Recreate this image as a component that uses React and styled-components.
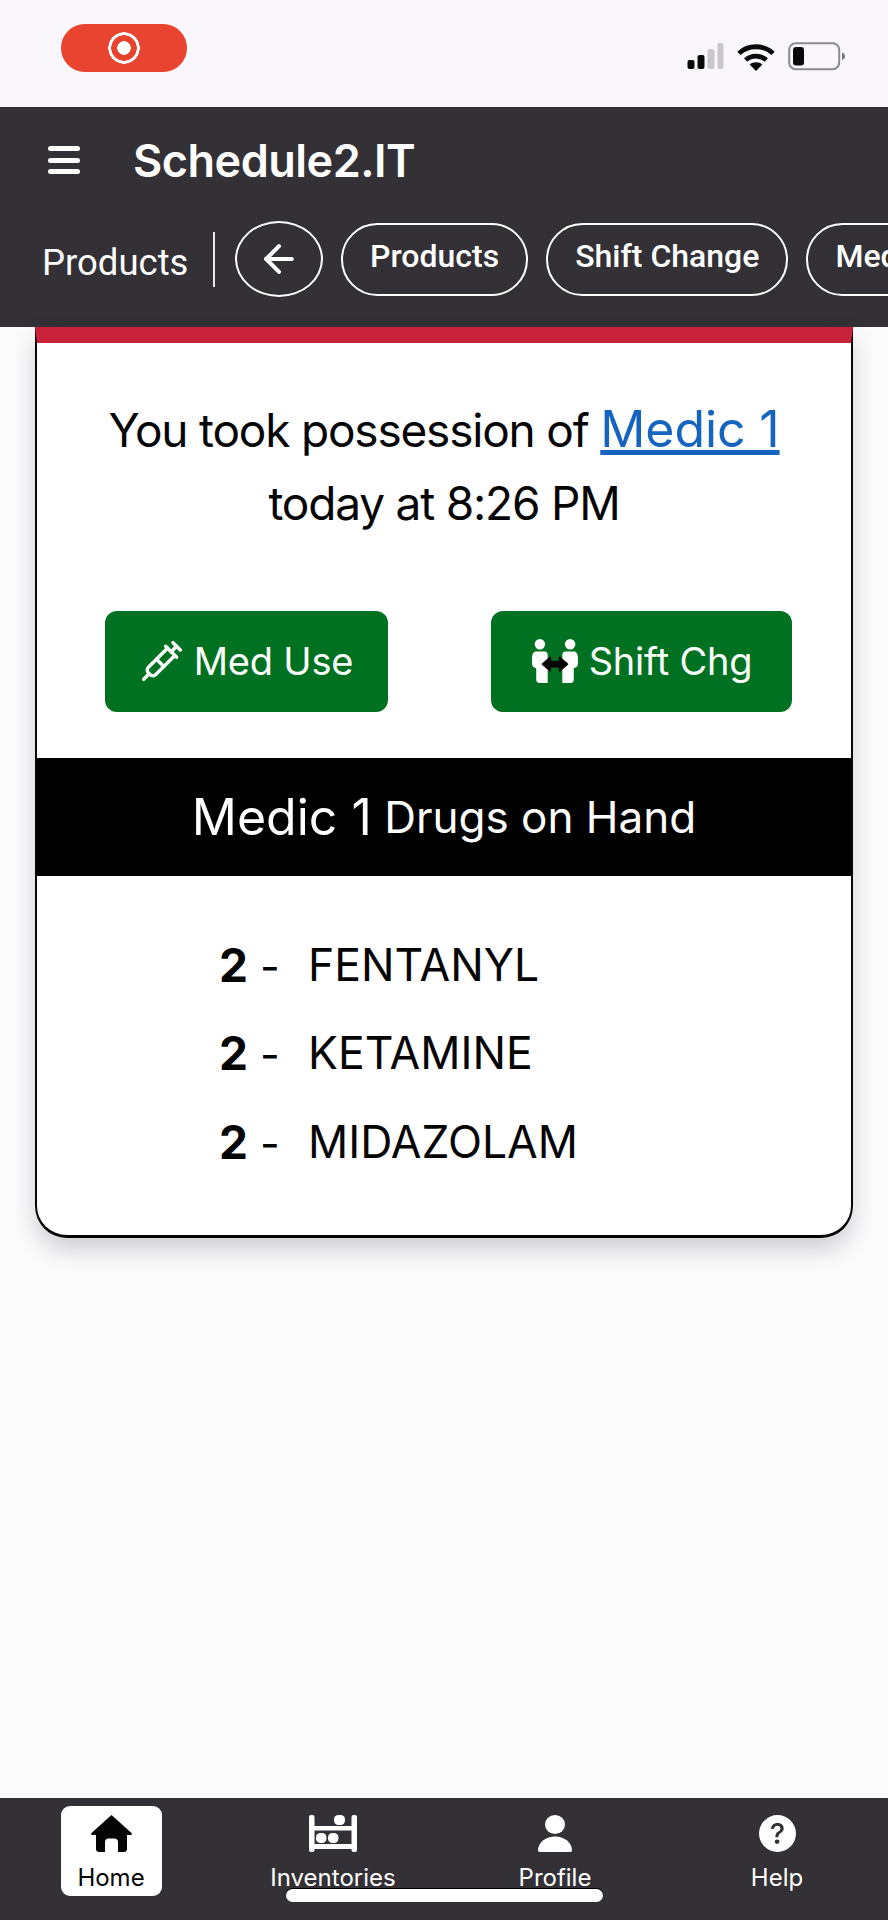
import React from "react"
import styled, { createGlobalStyle } from "styled-components"
import { ArrowLeft, Syringe } from "lucide-react"
import { BsQuestionCircleFill } from "react-icons/bs"

const drugs = ["FENTANYL", "KETAMINE", "MIDAZOLAM"]
const pills = ["Products", "Shift Change", "Med Use"]

function SignalIcon() {
  return (
    <svg width="37" height="28" viewBox="0 0 36 28">
      <rect x="0" y="17" width="7" height="9" rx="2" fill="#0a0a0a" />
      <rect x="10" y="12" width="7" height="14" rx="2" fill="#0a0a0a" />
      <rect x="20" y="6" width="7" height="20" rx="2" fill="#c9c7cb" />
      <rect x="30" y="0" width="6" height="26" rx="2" fill="#c9c7cb" />
    </svg>
  )
}

function WifiIcon() {
  return (
    <svg width="40" height="29" viewBox="0 0 38 28" fill="none" stroke="#0a0a0a" strokeWidth="4.6">
      <path d="M2.5 10C11.5 1.5 26.5 1.5 35.5 10" />
      <path d="M9 16.5C14.5 11.5 23.5 11.5 29 16.5" />
      <path d="M19 27l-6.2-6.2c3.4-2.8 9-2.8 12.4 0z" fill="#0a0a0a" stroke="none" />
    </svg>
  )
}

function BatteryIcon() {
  return (
    <svg width="58" height="30" viewBox="0 0 58 30">
      <rect x="1.2" y="1.2" width="50" height="26" rx="6.5" fill="none" stroke="#8b8a8e" strokeWidth="2" />
      <rect x="5" y="5" width="11" height="18.5" rx="3" fill="#0a0a0a" />
      <path d="M54 10.5c2.4 1 3 2.2 3 3.7s-.6 2.7-3 3.7z" fill="#77767a" />
    </svg>
  )
}

function ShiftIcon() {
  return (
    <svg width="48" height="44" viewBox="0 0 46 42">
      <g fill="#fff">
        <circle cx="8.5" cy="5" r="5" />
        <circle cx="37.5" cy="5" r="5" />
        <path d="M5 12h8c2 0 3 1.500 3 3.500V42H8c-1.800 0-3-1-3-3V28c-2.500-.5-4-2-4-4.500v-5C1 14.500 2.500 12 5 12z" />
        <path d="M41 12h-8c-2 0-3 1.500-3 3.500V42h8c1.800 0 3-1 3-3V28c2.500-.5 4-2 4-4.500v-5c0-4-1.500-6.500-4-6.500z" />
      </g>
      <path d="M11 24l7.500-6.500v4h9v-4L35 24l-7.500 6.500v-4h-9v4z" fill="#050505" stroke="#050505" strokeWidth="1.500" strokeLinejoin="round" />
    </svg>
  )
}

function HomeIcon() {
  return (
    <svg width="41" height="37" viewBox="0 0 41 37">
      <path
        d="M20.500 0 40.500 18c.8 1 .2 2-1 2H36v14c0 1.700-1.300 3-3 3h-6V27c0-2-1.500-3.500-3.500-3.500h-6C15.500 23.500 14 25 14 27v10H8c-1.700 0-3-1.300-3-3V20H1.500c-1.200 0-1.800-1-1-2z"
        fill="#050505"
      />
    </svg>
  )
}

function ShelfIcon() {
  return (
    <svg width="48" height="37" viewBox="0 0 48 37">
      <g fill="#fff">
        <rect x="0" y="0" width="5.500" height="37" rx="2" />
        <rect x="42.500" y="0" width="5.500" height="37" rx="2" />
        <rect x="3" y="11" width="42" height="4.500" />
        <rect x="3" y="29" width="42" height="5" />
        <rect x="7" y="18" width="10.500" height="10" rx="4.500" />
        <rect x="19" y="18" width="10.500" height="10" rx="4.500" />
        <rect x="25" y="0" width="11" height="10" rx="4.500" />
      </g>
    </svg>
  )
}

function PersonIcon() {
  return (
    <svg width="34" height="37" viewBox="0 0 34 37">
      <ellipse cx="17" cy="9.500" rx="10" ry="9.500" fill="#fff" />
      <path d="M2 37c-1.500 0-2-1-2-2 .5-8 8-13.500 17-13.500S33.500 27 34 35c0 1-.5 2-2 2z" fill="#fff" />
    </svg>
  )
}

const tabs = [
  { label: "Home", icon: <HomeIcon />, active: true },
  { label: "Inventories", icon: <ShelfIcon /> },
  { label: "Profile", icon: <PersonIcon /> },
  { label: "Help", icon: <BsQuestionCircleFill size={37} color="#fff" /> },
]

export default function App() {
  return (
    <Page>
      <GlobalStyle />
      <StatusBar>
        <RecordPill>
          <RecordDot />
        </RecordPill>
        <StatusIcons>
          <SignalIcon />
          <WifiIcon />
          <BatteryIcon />
        </StatusIcons>
      </StatusBar>

      <Header>
        <TitleRow>
          <Hamburger>
            <span />
            <span />
            <span />
          </Hamburger>
          <Title>Schedule2.IT</Title>
        </TitleRow>
        <CrumbRow>
          <Crumb>Products</Crumb>
          <CrumbDivider />
          <BackButton aria-label="Back">
            <ArrowLeft size={44} strokeWidth={2.2} />
          </BackButton>
          {pills.map((p) => (
            <Pill key={p}>{p}</Pill>
          ))}
        </CrumbRow>
      </Header>

      <Main>
        <Card>
          <Possession>
            You took possession of <MedicLink href="#">Medic 1</MedicLink>
            <br />
            today at 8:26 PM
          </Possession>
          <Actions>
            <ActionButton $width={283}>
              <Syringe size={44} strokeWidth={1.9} />
              Med Use
            </ActionButton>
            <ActionButton $width={301}>
              <ShiftIcon />
              Shift Chg
            </ActionButton>
          </Actions>
          <HandBar>
            <big>Medic 1</big> Drugs on Hand
          </HandBar>
          <DrugList>
            {drugs.map((d) => (
              <DrugRow key={d}>
                <DrugCount>
                  <b>2</b> -
                </DrugCount>
                {d}
              </DrugRow>
            ))}
          </DrugList>
        </Card>
      </Main>

      <BottomNav>
        {tabs.map((t) => (
          <Tab key={t.label} $active={t.active}>
            <TabIcon>{t.icon}</TabIcon>
            {t.label}
          </Tab>
        ))}
        <HomeIndicator />
      </BottomNav>
    </Page>
  )
}

const GlobalStyle = createGlobalStyle`
  html, body {
    margin: 0;
    padding: 0;
    background: #fdfcfd;
  }
  * {
    box-sizing: border-box;
  }
`

const Page = styled.div`
  width: 888px;
  height: 1920px;
  display: flex;
  flex-direction: column;
  overflow: hidden;
  font-family: Inter, "Liberation Sans", sans-serif;
  color: #050505;
`

const StatusBar = styled.div`
  height: 107px;
  flex: none;
  background: #f9f7fb;
  display: flex;
  justify-content: space-between;
  padding: 24px 42px 0 61px;
`

const RecordPill = styled.div`
  width: 126px;
  height: 48px;
  border-radius: 24px;
  background: #e8442f;
  display: flex;
  align-items: center;
  justify-content: center;
`

const RecordDot = styled.div`
  width: 32px;
  height: 32px;
  border-radius: 50%;
  background: radial-gradient(circle, #fff 0 6.500px, #e8442f 7px 12.500px, #fff 13px 15.500px, #e8442f 16px);
`

const StatusIcons = styled.div`
  display: flex;
  align-items: center;
  gap: 12px;
  height: 30px;
  margin-top: 18px;
`

const Header = styled.header`
  height: 220px;
  flex: none;
  background: #333135;
  color: #fff;
  overflow: hidden;
  font-family: Roboto, "Liberation Sans", sans-serif;
`

const TitleRow = styled.div`
  display: flex;
  align-items: center;
  height: 106px;
  padding-left: 48px;
  gap: 53px;
`

const Hamburger = styled.div`
  width: 32px;
  display: flex;
  flex-direction: column;
  gap: 6.500px;

  span {
    height: 5px;
    border-radius: 3px;
    background: #fff;
  }
`

const Title = styled.h1`
  margin: 0;
  font-size: 45px;
  font-weight: 600;
  font-family: Inter, sans-serif;
  letter-spacing: -0.5px;
`

const CrumbRow = styled.div`
  display: flex;
  align-items: center;
  padding-left: 42px;
  margin-top: 8px;
  white-space: nowrap;
`

const Crumb = styled.span`
  font-size: 36.500px;
  padding-top: 6px;
  width: 171px;
  flex: none;
`

const CrumbDivider = styled.div`
  width: 2px;
  height: 55px;
  flex: none;
  background: #e8e8e8;
`

const BackButton = styled.div`
  width: 88px;
  height: 76px;
  flex: none;
  margin: 0 18px 0 20px;
  border: 2px solid #fff;
  border-radius: 50%;
  display: flex;
  align-items: center;
  justify-content: center;
`

const Pill = styled.div`
  height: 73px;
  flex: none;
  padding: 0 27px 6px;
  margin-right: 18px;
  border: 2px solid #fff;
  border-radius: 37px;
  font-size: 32px;
  font-weight: 500;
  display: flex;
  align-items: center;
`

const Main = styled.main`
  flex: 1;
  padding: 0 35px;
`

const Card = styled.section`
  width: 818px;
  height: 911px;
  background: #fff;
  border: solid #050505;
  border-width: 0 2px 3px;
  border-top: 16px solid #c8233a;
  border-radius: 0 0 32px 32px;
  box-shadow: 0 12px 24px rgba(40, 40, 50, 0.22);
`

const Possession = styled.p`
  margin: 0;
  padding-top: 49.500px;
  font-size: 46px;
  letter-spacing: -1.200px;
  line-height: 73px;
  text-align: center;
`

const MedicLink = styled.a`
  color: #1565c0;
  font-size: 50px;
  letter-spacing: -0.1px;
`

const Actions = styled.div`
  display: flex;
  justify-content: space-between;
  padding: 0 59px 0 68px;
  margin-top: 71px;
`

const ActionButton = styled.div`
  width: ${(p) => p.$width}px;
  height: 101px;
  border-radius: 12px;
  background: #007021;
  color: #fcfffc;
  font-size: 38px;
  letter-spacing: -0.2px;
  display: flex;
  align-items: center;
  justify-content: center;
  gap: 10px;
`

const HandBar = styled.div`
  height: 118px;
  margin-top: 46px;
  background: #000;
  color: #fff;
  font-size: 44px;
  display: flex;
  align-items: center;
  justify-content: center;
  white-space: pre;

  big {
    font-size: 50px;
  }
`

const DrugList = styled.div`
  padding: 45px 0 0 182px;
`

const DrugRow = styled.div`
  display: flex;
  align-items: center;
  height: 88.500px;
  font-size: 44.500px;
`

const DrugCount = styled.span`
  width: 89px;
  flex: none;
  font-size: 43px;

  b {
    font-weight: 700;
    font-size: 46px;
  }
`

const BottomNav = styled.nav`
  position: relative;
  height: 122px;
  flex: none;
  background: #333135;
  display: grid;
  grid-template-columns: 222px 222px 222px 222px;
  padding: 8px 0 0 0;
`

const Tab = styled.div`
  justify-self: center;
  width: 101px;
  height: 90px;
  border-radius: 9px;
  background: ${(p) => (p.$active ? "#fff" : "transparent")};
  color: ${(p) => (p.$active ? "#050505" : "#fff")};
  display: flex;
  flex-direction: column;
  align-items: center;
  font-size: 24px;
  white-space: nowrap;
  font-family: Inter, sans-serif;
`

const TabIcon = styled.div`
  height: 57px;
  display: flex;
  align-items: flex-start;
  justify-content: center;
  padding-top: 9px;
`

const HomeIndicator = styled.div`
  position: absolute;
  left: 286px;
  bottom: 18px;
  width: 317px;
  height: 13px;
  border-radius: 7px;
  background: #fff;
  box-shadow: 0 -1px 0 #000;
`
